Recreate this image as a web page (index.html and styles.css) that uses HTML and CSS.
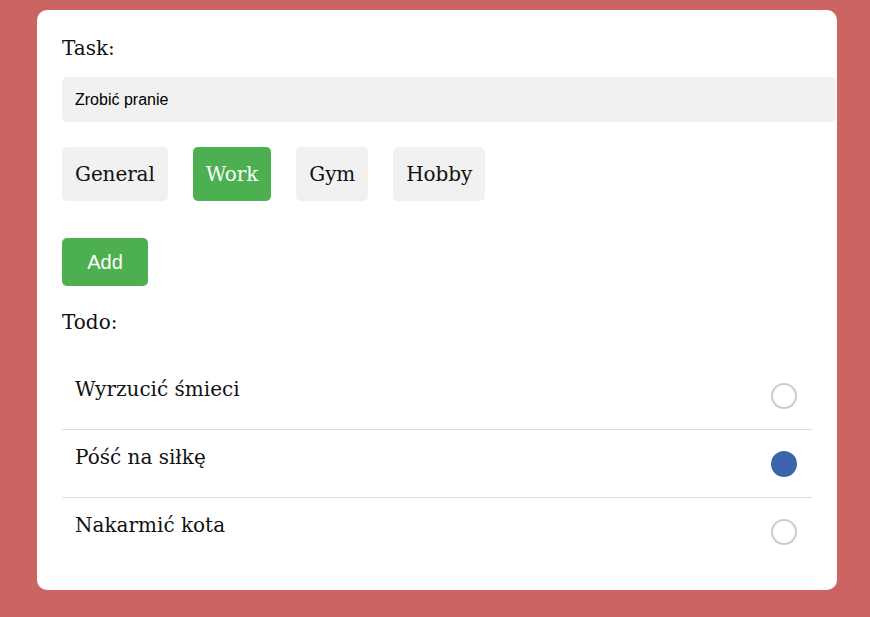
FILE: index.html
```html
<!DOCTYPE html>
<html lang="pl">
<head>
    <meta charset="UTF-8">
    <meta name="viewport" content="width=device-width, initial-scale=1.0">
    <title>Todo</title>
    <link rel="stylesheet" href="styles.css">
</head>
<body>
    <div class="card">
        <label class="label" for="task">Task:</label>
        <input type="text" id="task" class="task-input" value="Zrobić pranie">
        <div class="categories">
            <button class="category">General</button>
            <button class="category active">Work</button>
            <button class="category">Gym</button>
            <button class="category">Hobby</button>
        </div>
        <button class="add-btn">Add</button>
        <div class="label todo-label">Todo:</div>
        <ul class="todo-list">
            <li class="todo-item">
                <span class="todo-text">Wyrzucić śmieci</span>
                <span class="check"></span>
            </li>
            <li class="todo-item">
                <span class="todo-text">Póść na siłkę</span>
                <span class="check done"></span>
            </li>
            <li class="todo-item">
                <span class="todo-text">Nakarmić kota</span>
                <span class="check"></span>
            </li>
        </ul>
    </div>
</body>
</html>
```

FILE: styles.css
```css
body {
    margin: 0;
    padding: 10px 0 0 37px;
    background-color: #cc6464;
    font-family: 'DejaVu Serif', Georgia, serif;
    color: #111;
}
.card {
    width: 750px;
    padding: 25px 25px 24px;
    background-color: #fff;
    border-radius: 10px;
}
.label {
    display: block;
    font-size: 20px;
    line-height: 26px;
    margin-bottom: 16px;
}
.task-input {
    display: block;
    width: 100%;
    height: 45px;
    padding: 0 11px 0 13px;
    border: none;
    border-radius: 5px;
    background-color: #f1f1f1;
    font-family: 'Liberation Sans', Arial, sans-serif;
    font-size: 16px;
    color: #000;
    outline: none;
}
.categories {
    display: flex;
    gap: 25px;
    margin-top: 25px;
}
.category {
    height: 54px;
    padding: 0 13px;
    border: none;
    border-radius: 5px;
    background-color: #f1f1f1;
    font-family: 'DejaVu Serif', Georgia, serif;
    font-size: 20px;
    letter-spacing: -0.1px;
    color: #111;
    cursor: pointer;
}
.category.active {
    background-color: #4caf50;
    color: #fff;
}
.add-btn {
    display: block;
    width: 86px;
    height: 48px;
    margin-top: 37px;
    border: none;
    border-radius: 5px;
    background-color: #4caf50;
    color: #fff;
    font-family: 'Liberation Sans', Arial, sans-serif;
    font-size: 20px;
    cursor: pointer;
}
.todo-label {
    margin: 23px 0 27px;
}
.todo-list {
    list-style: none;
    margin: 0;
    padding: 0;
}
.todo-item {
    display: flex;
    justify-content: space-between;
    align-items: flex-start;
    box-sizing: border-box;
    height: 68px;
    padding: 15px 15px 0 13px;
    border-bottom: 1px solid #ddd;
}
.todo-item:last-child {
    border-bottom: none;
}
.todo-text {
    font-size: 20px;
    line-height: 24px;
}
.check {
    width: 22px;
    height: 22px;
    margin-top: 6px;
    border: 2px solid #ccc;
    border-radius: 50%;
}
.check.done {
    background-color: #3f63ae;
    border-color: #3f63ae;
}
```
